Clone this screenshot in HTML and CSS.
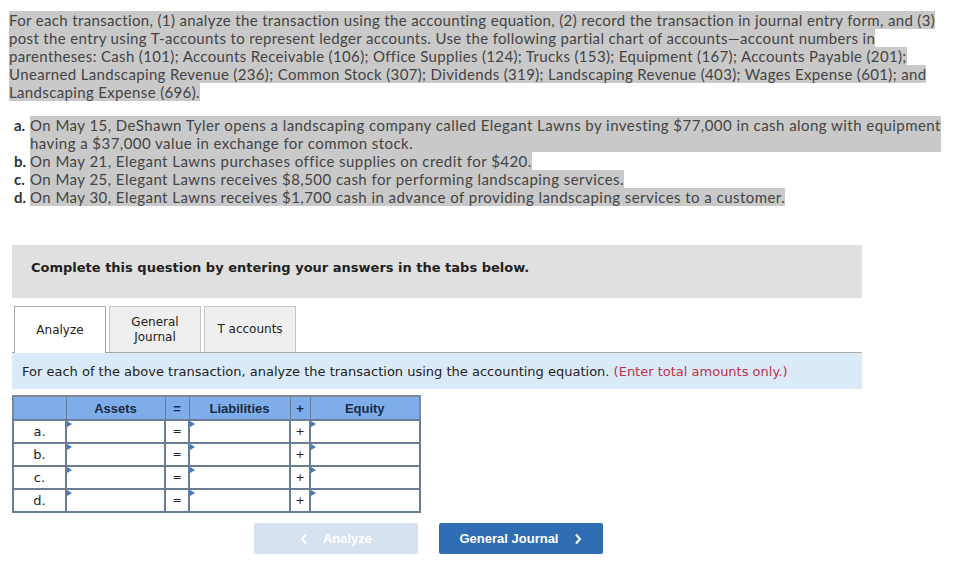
FILE: index.html
```html
<!DOCTYPE html>
<html lang="en">
<head>
    <meta charset="UTF-8">
    <title>Analyze transactions</title>
    <link rel="stylesheet" href="styles.css">
</head>
<body>
    <p class="prompt"><span class="sel">For each transaction, (1) analyze the transaction using the accounting equation, (2) record the transaction in journal entry form, and (3)<br>post the entry using T-accounts to represent ledger accounts. Use the following partial chart of accounts&mdash;account numbers in<br>parentheses: Cash (101); Accounts Receivable (106); Office Supplies (124); Trucks (153); Equipment (167); Accounts Payable (201);<br>Unearned Landscaping Revenue (236); Common Stock (307); Dividends (319); Landscaping Revenue (403); Wages Expense (601); and<br>Landscaping Expense (696).</span></p>

    <ol class="events">
        <li><b>a.</b><span class="sel">On May 15, DeShawn Tyler opens a landscaping company called Elegant Lawns by investing $77,000 in cash along with equipment<br>having a $37,000 value in exchange for common stock.</span></li>
        <li><b>b.</b><span class="sel">On May 21, Elegant Lawns purchases office supplies on credit for $420.</span></li>
        <li><b>c.</b><span class="sel">On May 25, Elegant Lawns receives $8,500 cash for performing landscaping services.</span></li>
        <li><b>d.</b><span class="sel">On May 30, Elegant Lawns receives $1,700 cash in advance of providing landscaping services to a customer.</span></li>
    </ol>

    <div class="task">
        <div class="banner">Complete this question by entering your answers in the tabs below.</div>

        <div class="tabs">
            <div class="tab active">Analyze</div>
            <div class="tab">General<br>Journal</div>
            <div class="tab">T accounts</div>
        </div>

        <div class="hint">For each of the above transaction, analyze the transaction using the accounting equation. <span class="red">(Enter total amounts only.)</span></div>

        <table class="eq">
            <colgroup>
                <col style="width: 53px">
                <col style="width: 99px">
                <col style="width: 24px">
                <col style="width: 101px">
                <col style="width: 20px">
                <col style="width: 110px">
            </colgroup>
            <tr>
                <th></th>
                <th>Assets</th>
                <th>=</th>
                <th>Liabilities</th>
                <th>+</th>
                <th>Equity</th>
            </tr>
            <tr>
                <td class="lbl">a.</td>
                <td class="cell"></td>
                <td class="op">=</td>
                <td class="cell"></td>
                <td class="op">+</td>
                <td class="cell"></td>
            </tr>
            <tr>
                <td class="lbl">b.</td>
                <td class="cell"></td>
                <td class="op">=</td>
                <td class="cell"></td>
                <td class="op">+</td>
                <td class="cell"></td>
            </tr>
            <tr>
                <td class="lbl">c.</td>
                <td class="cell"></td>
                <td class="op">=</td>
                <td class="cell"></td>
                <td class="op">+</td>
                <td class="cell"></td>
            </tr>
            <tr>
                <td class="lbl">d.</td>
                <td class="cell"></td>
                <td class="op">=</td>
                <td class="cell"></td>
                <td class="op">+</td>
                <td class="cell"></td>
            </tr>
        </table>

        <div class="nav">
            <button class="btn prev">
                <svg width="8" height="12" viewBox="0 0 8 12"><polyline points="6,1.5 2,6 6,10.5" fill="none" stroke="#fff" stroke-width="2"/></svg>
                Analyze
            </button>
            <button class="btn next">
                General Journal
                <svg width="8" height="12" viewBox="0 0 8 12"><polyline points="2,1.5 6,6 2,10.5" fill="none" stroke="#fff" stroke-width="2"/></svg>
            </button>
        </div>
    </div>
</body>
</html>
```

FILE: styles.css
```css
body {
    margin: 0;
    padding: 11px 9px 0;
    font-family: Lato, "Open Sans", sans-serif;
    color: #444;
    background: #fff;
}
.sel {
    background: #c9c9c9;
}
.prompt {
    margin: 0;
    font-size: 15px;
    line-height: 18px;
    letter-spacing: 0.35px;
}
.events {
    list-style: none;
    margin: 15px 0 0;
    padding: 0 0 0 5px;
    font-size: 15px;
    line-height: 18px;
    letter-spacing: 0.45px;
}
.events li {
    display: flex;
}
.events b {
    width: 16px;
    flex: none;
    color: #333;
    letter-spacing: 0;
}
.task {
    margin-top: 39px;
    width: 850px;
    margin-left: 3px;
    font-family: "DejaVu Sans", Verdana, sans-serif;
    font-size: 13px;
    color: #222;
}
.banner {
    background: #e0e0e0;
    height: 53px;
    padding-left: 19px;
    line-height: 46px;
    font-weight: bold;
    font-size: 13px;
}
.tabs {
    display: flex;
    gap: 3px;
    margin-top: 8px;
    padding-left: 2px;
    border-bottom: 1px solid #a8a8a8;
}
.tab {
    width: 90px;
    height: 45px;
    border: 1px solid #c6c6c6;
    border-bottom: none;
    background: #efefef;
    display: flex;
    align-items: center;
    justify-content: center;
    text-align: center;
    font-size: 12px;
    line-height: 15px;
}
.tab.active {
    background: #fff;
    height: 46px;
    margin-bottom: -1px;
    border-color: #a8a8a8;
}
.hint {
    background: #dbeaf8;
    height: 36px;
    line-height: 38px;
    padding-left: 10px;
}
.red {
    color: #c0304a;
}
.eq {
    margin-top: 6px;
    width: 407px;
    table-layout: fixed;
    border-collapse: collapse;
    border: 2px solid #7d8796;
}
.eq th {
    background: #7fadea;
    color: #1a2b44;
    height: 22px;
    padding: 0;
    font-family: Arial, "Liberation Sans", sans-serif;
    font-size: 13px;
    border: 1px solid #6b7d94;
}
.eq td {
    height: 21px;
    padding: 0;
    border: 2px solid #6b7d94;
    text-align: center;
}
.eq .lbl {
    font-size: 13px;
    color: #222;
}
.eq .op {
    font-size: 11px;
}
.eq .cell {
    position: relative;
    background: #fff;
}
.eq .cell::before {
    content: "";
    position: absolute;
    top: 0;
    left: 0;
    border-top: 3px solid transparent;
    border-bottom: 3px solid transparent;
    border-left: 5px solid #3f7bc4;
}
.nav {
    display: flex;
    gap: 21px;
    margin-top: 10px;
    padding-left: 242px;
}
.btn {
    width: 164px;
    height: 31px;
    border: none;
    border-radius: 2px;
    display: flex;
    align-items: center;
    justify-content: center;
    gap: 15px;
    font-family: Arial, "Liberation Sans", sans-serif;
    font-weight: bold;
    font-size: 13px;
    color: #fff;
}
.btn.prev {
    background: #d6e2ef;
}
.btn.next {
    background: #2f6eb5;
    gap: 16px;
}
```
